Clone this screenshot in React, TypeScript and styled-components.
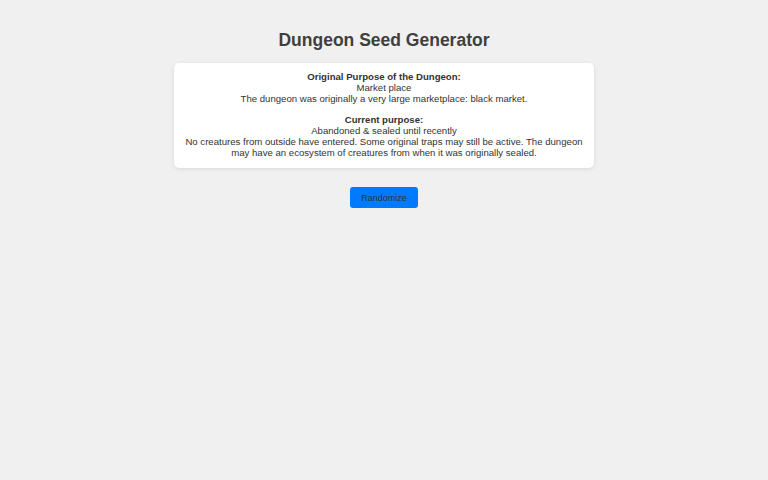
import React from 'react'
import styled, { createGlobalStyle } from 'styled-components'

const GlobalStyle = createGlobalStyle`
  body {
    margin: 0;
    background-color: #f0f0f0;
    font-family: "Liberation Sans", Arial, sans-serif;
    color: #333;
  }
`

const Page = styled.div`
  display: flex;
  flex-direction: column;
  align-items: center;
  padding-top: 29px;
`

const Title = styled.h1`
  margin: 0 0 12px;
  font-size: 17.5px;
  line-height: 22px;
  color: #3f3f3f;
`

const Card = styled.div`
  width: 400px;
  padding: 9px 10px 10px;
  background-color: #ffffff;
  border-radius: 5px;
  box-shadow: 0 1px 4px rgba(0, 0, 0, 0.1);
  text-align: center;
  font-size: 9.6px;
  line-height: 10.8px;
`

const Section = styled.div`
  & + & {
    margin-top: 10.8px;
  }
`

const Label = styled.div`
  font-weight: bold;
`

const Button = styled.button`
  margin-top: 19px;
  width: 68px;
  height: 21px;
  padding: 0;
  border: none;
  border-radius: 3px;
  background-color: #007bff;
  color: #333;
  font-family: "Liberation Sans", Arial, sans-serif;
  font-size: 9px;
  cursor: pointer;
`

function App() {
  return (
    <>
      <GlobalStyle />
      <Page>
        <Title>Dungeon Seed Generator</Title>
        <Card>
          <Section>
            <Label>Original Purpose of the Dungeon:</Label>
            <div>Market place</div>
            <div>The dungeon was originally a very large marketplace: black market.</div>
          </Section>
          <Section>
            <Label>Current purpose:</Label>
            <div>Abandoned &amp; sealed until recently</div>
            <div>
              No creatures from outside have entered. Some original traps may still be active. The
              dungeon may have an ecosystem of creatures from when it was originally sealed.
            </div>
          </Section>
        </Card>
        <Button>Randomize</Button>
      </Page>
    </>
  )
}

export default App
